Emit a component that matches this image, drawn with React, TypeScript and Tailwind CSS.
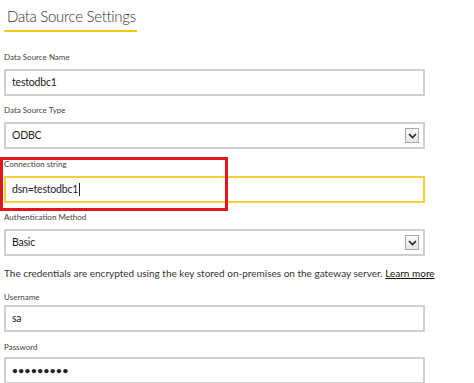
import React from "react";

function Chevron() {
  return (
    <div className="w-[14px] h-[15px] border border-[#a9a9a9] bg-gradient-to-b from-[#fafafa] to-[#e6e6e6] flex items-center justify-center">
      <svg width="9" height="6" viewBox="0 0 9 6">
        <path d="M1 1 L4.5 4.5 L8 1" fill="none" stroke="#222" strokeWidth="1.6" />
      </svg>
    </div>
  );
}

function Label({ children, cls = "" }: { children: React.ReactNode; cls?: string }) {
  return <div className={`h-[12px] leading-[12px] text-[8px] text-[#444] ${cls}`}>{children}</div>;
}

function Box({
  children,
  select = false,
  yellow = false,
  cls = "",
}: {
  children: React.ReactNode;
  select?: boolean;
  yellow?: boolean;
  cls?: string;
}) {
  return (
    <div
      className={`h-[27px] w-[421px] border-2 ${yellow ? "border-[#f3cf3a]" : "border-[#d0d0d0]"} bg-white flex items-center justify-between pl-[6px] pr-[4px] text-[10.5px] tracking-[-0.2px] text-[#222] ${cls}`}
    >
      <div className="flex items-center">{children}</div>
      {select && <Chevron />}
    </div>
  );
}

export default function App() {
  return (
    <div className="relative w-[474px] h-[383px] bg-white overflow-hidden font-['Lato',sans-serif]">
      <div className="pl-[7px] pt-[5px] text-[15px] leading-[22px] font-light tracking-[-0.3px] text-[#333]">
        Data Source Settings
      </div>
      <div className="ml-[4px] mt-[3px] w-[133px] h-[2px] bg-[#f2c811]" />
      <div className="pl-[4px] mt-[19px] flex flex-col">
        <Label>Data Source Name</Label>
        <Box cls="mt-[6px]">testodbc1</Box>
        <Label cls="mt-[8px]">Data Source Type</Label>
        <Box cls="mt-[6px]" select>ODBC</Box>
        <Label cls="mt-[9px]">Connection string</Label>
        <Box cls="mt-[6px]" yellow>
          dsn=testodbc1<span className="inline-block w-[1px] h-[13px] bg-[#222] ml-[1px]" />
        </Box>
        <Label cls="mt-[8px]">Authentication Method</Label>
        <Box cls="mt-[6px]" select>Basic</Box>
        <div className="mt-[9px] h-[16px] leading-[16px] text-[10px] text-[#333] whitespace-nowrap">
          The credentials are encrypted using the key stored on-premises on the gateway server.{" "}
          <span className="underline text-[#111]">Learn more</span>
        </div>
        <Label cls="mt-[10px]">Username</Label>
        <Box cls="mt-[2px]">sa</Box>
        <Label cls="mt-[9px]">Password</Label>
        <Box cls="mt-[4px]">
          <span className="text-[10px] tracking-[0.5px] font-bold">•••••••••</span>
        </Box>
      </div>
      <div className="absolute left-0 top-[157px] w-[228px] h-[54px] border-[3px] border-[#e2161f]" />
    </div>
  );
}
